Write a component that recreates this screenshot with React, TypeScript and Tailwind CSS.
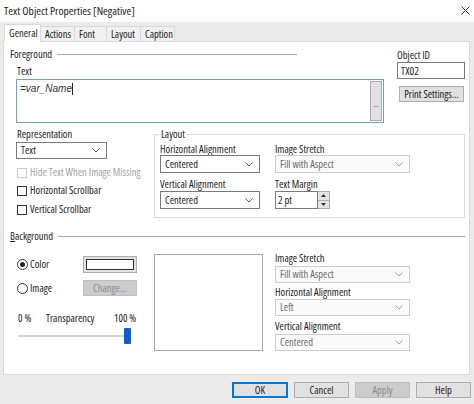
import React from 'react';

const Chevron = ({ color = '#444' }: { color?: string }) => (
  <svg width="8" height="5" viewBox="0 0 8 5">
    <path d="M0.5 0.5 L4 4 L7.5 0.5" fill="none" stroke={color} strokeWidth="1" />
  </svg>
);

function Select({ value, className, disabled }: { value: string; className: string; disabled?: boolean }) {
  return (
    <div
      className={`flex items-center justify-between pl-[4px] pr-[6px] border ${
        disabled ? 'border-[#cdcdcd] bg-[#fafafa] text-[#6a6a6a]' : 'border-[#7a7a7a] bg-white'
      } ${className}`}
    >
      <span>{value}</span>
      <Chevron color={disabled ? '#a0a0a0' : '#555'} />
    </div>
  );
}

function Checkbox({ label, disabled }: { label: string; disabled?: boolean }) {
  return (
    <div className="flex items-center h-[11px]">
      <div className={`w-[10px] h-[10px] border ${disabled ? 'border-[#cccccc]' : 'border-[#333]'} bg-white`} />
      <span className={`ml-[3px] whitespace-nowrap ${disabled ? 'text-[#a3a3a3]' : ''}`}>{label}</span>
    </div>
  );
}

function Radio({ checked }: { checked?: boolean }) {
  return (
    <div className="w-[11px] h-[11px] rounded-full border border-[#333] bg-white flex items-center justify-center">
      {checked && <div className="w-[5px] h-[5px] rounded-full bg-[#222]" />}
    </div>
  );
}

function Button({ label, className, disabled }: { label: string; className: string; disabled?: boolean }) {
  return (
    <div
      className={`flex items-center justify-center whitespace-nowrap border ${
        disabled ? 'bg-[#cccccc] border-[#bfbfbf] text-[#8c8c8c]' : 'bg-[#e1e1e1] border-[#adadad]'
      } ${className}`}
    >
      {label}
    </div>
  );
}

const tabs = [
  { name: 'Actions', w: 'w-[35px]' },
  { name: 'Font', w: 'w-[33px]' },
  { name: 'Layout', w: 'w-[35px]' },
  { name: 'Caption', w: 'w-[35px]' },
];

export default function App() {
  return (
    <div className="w-[474px] h-[404px] overflow-hidden flex flex-col bg-[#ebebeb] text-[#222] text-[10.5px] leading-[11px] font-['Open_Sans',sans-serif] font-stretch-condensed">
      {/* title bar */}
      <div className="h-[22px] shrink-0 bg-white flex items-center justify-between pl-[4px] pr-[4px]">
        <span className="text-[11.5px] leading-[14px]">Text Object Properties [Negative]</span>
        <svg width="9" height="9" viewBox="0 0 9 9" className="mb-[2px]">
          <path d="M0.5 0.5 L8.5 8.5 M8.5 0.5 L0.5 8.5" stroke="#333" strokeWidth="1" />
        </svg>
      </div>

      {/* tabs */}
      <div className="h-[20px] shrink-0 flex items-end pl-[4px] relative z-10 -mb-px">
        <div className="w-[37px] h-[18px] bg-white border border-b-0 border-[#d9d9d9] flex items-center pl-[4px] pb-[1px]">
          General
        </div>
        {tabs.map((t) => (
          <div
            key={t.name}
            className={`${t.w} -ml-px h-[16px] bg-[#f0f0f0] border border-[#d9d9d9] flex items-center pl-[4px]`}
          >
            {t.name}
          </div>
        ))}
      </div>

      {/* panel */}
      <div className="ml-[3px] mr-[4px] h-[334px] shrink-0 bg-white border border-[#d9d9d9] flex flex-col">
        {/* foreground top row */}
        <div className="flex">
          <div className="w-[380px] pl-[6px] flex flex-col">
            <div className="mt-[7px] flex items-center">
              <span>Foreground</span>
              <div className="ml-[5px] w-[240px] h-px bg-[#a6a6a6]" />
            </div>
            <span className="mt-[6px] ml-[7px]">Text</span>
            <div className="mt-[2px] ml-[6px] w-[368px] h-[44px] border border-[#6f9ec6] flex justify-between">
              <div className="pl-[3px] pt-[3px] flex items-start text-[10px] leading-[12px] italic font-['Liberation_Sans',sans-serif] font-stretch-normal text-[#333]">
                <span>=var_Name</span>
                <span className="w-px h-[12px] bg-[#222]" />
              </div>
              <div className="my-[1px] mr-[1px] w-[12px] bg-[#e1e1e1] border border-[#adadad] flex items-center justify-center pt-[4px] text-[8px] text-[#555]">
                ...
              </div>
            </div>
          </div>
          <div className="ml-[13px] flex flex-col">
            <span className="mt-[8px]">Object ID</span>
            <div className="mt-[1px] w-[68px] h-[17px] border border-[#7a7a7a] flex items-center pl-[3px] text-[11px]">
              TX02
            </div>
            <Button label="Print Settings..." className="mt-[7px] ml-[2px] w-[65px] h-[16px]" />
          </div>
        </div>

        {/* representation / layout row */}
        <div className="flex">
          <div className="ml-[12px] w-[138px] flex flex-col">
            <span className="mt-[6px] ml-px">Representation</span>
            <Select value="Text" className="mt-[2px] w-[91px] h-[17px]" />
            <div className="mt-[8px] ml-px">
              <Checkbox label="Hide Text When Image Missing" disabled />
            </div>
            <div className="mt-[7px] ml-px">
              <Checkbox label="Horizontal Scrollbar" />
            </div>
            <div className="mt-[8px] ml-px">
              <Checkbox label="Vertical Scrollbar" />
            </div>
          </div>
          <div className="mt-[11px] w-[311px] h-[84px] border border-[#d9d9d9] relative flex pl-[5px]">
            <span className="absolute -top-[6px] left-[4px] bg-white px-[2px]">Layout</span>
            <div className="w-[100px] flex flex-col">
              <span className="mt-[9px]">Horizontal Alignment</span>
              <Select value="Centered" className="w-[100px] h-[18px]" />
              <span className="mt-[6px]">Vertical Alignment</span>
              <Select value="Centered" className="mt-px w-[100px] h-[18px]" />
            </div>
            <div className="ml-[15px] flex flex-col">
              <span className="mt-[9px]">Image Stretch</span>
              <Select value="Fill with Aspect" className="w-[135px] h-[18px]" disabled />
              <span className="mt-[6px]">Text Margin</span>
              <div className="mt-px flex h-[18px]">
                <div className="w-[43px] border border-[#7a7a7a] flex items-center pl-[2px]">2 pt</div>
                <div className="w-[12px] flex flex-col border border-l-0 border-[#adadad] bg-[#e5e5e5]">
                  <div className="flex-1 flex items-center justify-center border-b border-[#adadad]">
                    <svg width="5" height="3" viewBox="0 0 5 3"><path d="M0 3 L2.5 0 L5 3Z" fill="#333" /></svg>
                  </div>
                  <div className="flex-1 flex items-center justify-center">
                    <svg width="5" height="3" viewBox="0 0 5 3"><path d="M0 0 L2.5 3 L5 0Z" fill="#333" /></svg>
                  </div>
                </div>
              </div>
            </div>
          </div>
        </div>

        {/* background heading */}
        <div className="mt-[13px] ml-[6px] mr-[4px] flex items-center">
          <span>
            <span className="underline">B</span>ackground
          </span>
          <div className="ml-[5px] flex-1 h-px bg-[#a6a6a6]" />
        </div>

        {/* background row */}
        <div className="flex">
          <div className="ml-[13px] w-[137px] flex flex-col">
            <div className="mt-[14px] flex items-center h-[17px]">
              <div className="w-[66px] flex items-center">
                <Radio checked />
                <span className="ml-[2px]">Color</span>
              </div>
              <div className="w-[54px] h-[17px] bg-[#e1e1e1] border border-[#adadad] p-[2px]">
                <div className="w-full h-full bg-white border border-[#333]" />
              </div>
            </div>
            <div className="mt-[7px] flex items-center h-[16px]">
              <div className="w-[66px] flex items-center">
                <Radio />
                <span className="ml-[2px]">Image</span>
              </div>
              <Button label="Change..." className="w-[54px] h-[16px]" disabled />
            </div>
            <div className="mt-[17px] ml-px flex h-[11px]">
              <span className="w-[28px]">0 %</span>
              <span className="w-[68px]">Transparency</span>
              <span>100 %</span>
            </div>
            <div className="mt-[4px] ml-px w-[115px] h-[16px] relative">
              <div className="absolute left-0 top-[7px] w-[109px] h-[2px] bg-[#d4d4d4]" />
              <div className="absolute left-[106px] top-0 w-[7px] h-[16px] rounded-[1px] bg-[#0a5fd0]" />
            </div>
          </div>
          <div className="mt-[12px] w-[109px] h-[97px] border border-[#a9a9a9]" />
          <div className="ml-[12px] flex flex-col">
            <span className="mt-[11px]">Image Stretch</span>
            <Select value="Fill with Aspect" className="mt-[2px] w-[135px] h-[17px]" disabled />
            <span className="mt-[4px]">Horizontal Alignment</span>
            <Select value="Left" className="mt-px w-[135px] h-[17px]" disabled />
            <span className="mt-[5px]">Vertical Alignment</span>
            <Select value="Centered" className="mt-[2px] w-[135px] h-[17px]" disabled />
          </div>
        </div>
      </div>

      {/* footer buttons */}
      <div className="flex justify-end gap-[6px] pr-[3px] pt-[7px]">
        <div className="w-[56px] h-[16px] bg-[#e1e1e1] border-2 border-[#0078d7] flex items-center justify-center">
          OK
        </div>
        <Button label="Cancel" className="w-[55px] h-[16px]" />
        <Button label="Apply" className="w-[55px] h-[16px]" disabled />
        <Button label="Help" className="w-[55px] h-[16px]" />
      </div>
    </div>
  );
}
